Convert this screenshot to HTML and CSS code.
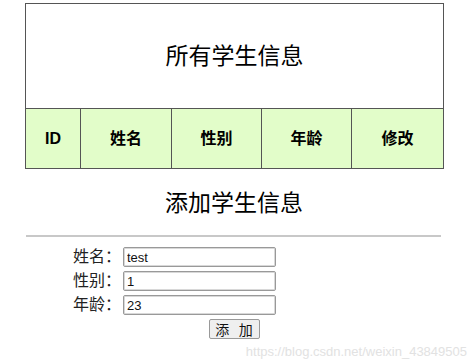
FILE: index.html
```html
<!DOCTYPE html>
<html lang="zh-CN">
<head>
    <meta charset="UTF-8">
    <title>学生信息</title>
    <link rel="stylesheet" href="styles.css">
</head>
<body>
    <div class="page">
        <table class="student-table">
            <colgroup>
                <col class="col-id">
                <col class="col-name">
                <col class="col-sex">
                <col class="col-age">
                <col class="col-edit">
            </colgroup>
            <tr>
                <td colspan="5" class="table-title">所有学生信息</td>
            </tr>
            <tr class="head-row">
                <th>ID</th>
                <th>姓名</th>
                <th>性别</th>
                <th>年龄</th>
                <th>修改</th>
            </tr>
        </table>

        <h2 class="add-title">添加学生信息</h2>
        <hr class="divider">

        <form class="add-form">
            <label for="name">姓名：</label>
            <input type="text" id="name" value="test">
            <label for="sex">性别：</label>
            <input type="text" id="sex" value="1">
            <label for="age">年龄：</label>
            <input type="text" id="age" value="23">
        </form>
        <div class="button-row">
            <button type="button" class="add-btn">添&nbsp;&nbsp;&nbsp;加</button>
        </div>
    </div>
    <div class="watermark">https://blog.csdn.net/weixin_43849505</div>
</body>
</html>
```

FILE: styles.css
```css
body {
    margin: 0;
    font-family: "Liberation Sans", "Noto Sans CJK SC", sans-serif;
    color: #000;
    background: #fff;
    position: relative;
    height: 364px;
    overflow: hidden;
}

.page {
    width: 418px;
    margin: 3px 0 0 25px;
}

.student-table {
    width: 418px;
    border-collapse: collapse;
    table-layout: fixed;
}

.student-table td,
.student-table th {
    border: 1px solid #555;
    text-align: center;
    vertical-align: middle;
}

.table-title {
    height: 104px;
    font-size: 23px;
    font-weight: normal;
    line-height: 28px;
    padding: 0;
}

.head-row th {
    height: 59px;
    background-color: #e2fdc9;
    font-size: 16px;
    font-weight: bold;
    line-height: 20px;
    padding: 0;
}

.col-id { width: 55px; }
.col-name { width: 91px; }
.col-sex { width: 90px; }
.col-age { width: 90px; }
.col-edit { width: 92px; }

.add-title {
    margin: 19px 0 0;
    text-align: center;
    font-size: 23px;
    font-weight: normal;
    line-height: 30px;
}

.divider {
    margin: 17px 2px 0 1px;
    border: none;
    border-top: 2px solid #c8c8c8;
    height: 0;
}

.add-form {
    display: grid;
    grid-template-columns: 96px 153px;
    column-gap: 2px;
    row-gap: 4px;
    margin-top: 10px;
    align-items: center;
}

.add-form label {
    text-align: right;
    font-size: 16px;
    line-height: 20px;
    color: #222;
}

.add-form input {
    box-sizing: border-box;
    width: 153px;
    height: 20px;
    padding: 0 3px;
    border: 1px solid #999;
    box-shadow: inset 0 0 0 1px #d8d8d8;
    border-radius: 2px;
    font-family: "Liberation Sans", sans-serif;
    font-size: 13px;
    color: #111;
}

.button-row {
    text-align: center;
    margin-top: 4px;
}

.add-btn {
    box-sizing: border-box;
    width: 51px;
    height: 20px;
    padding: 0;
    border: 1px solid #999;
    border-radius: 2px;
    background-color: #efefef;
    font-family: "Noto Sans CJK SC", sans-serif;
    font-size: 14px;
    line-height: 18px;
    color: #111;
}

.watermark {
    position: absolute;
    right: 7px;
    bottom: 5px;
    font-family: "Liberation Sans", sans-serif;
    font-size: 13px;
    color: #e2e2e2;
}
```
